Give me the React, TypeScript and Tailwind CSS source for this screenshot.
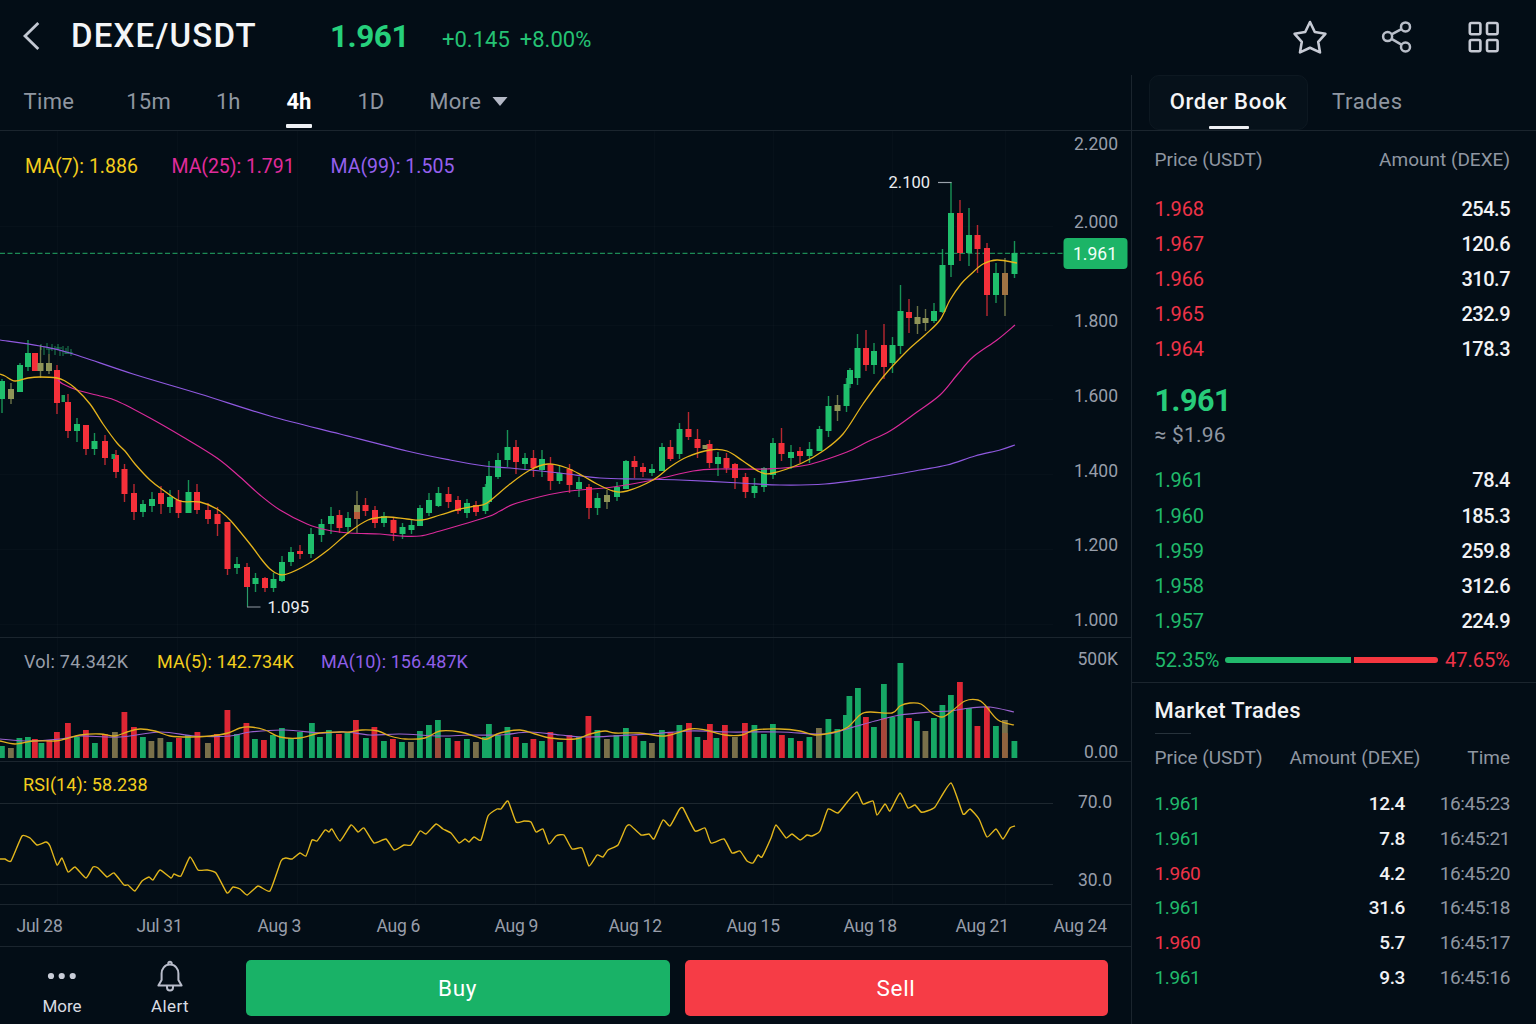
import React from 'react';

type Tone = 'up' | 'down' | 'flat';
type Point = [number, number];
// x, wick top, body top, body bottom, wick bottom, tone
type Candle = [number, number, number, number, number, Tone];
// x, top, tone
type VolumeBar = [number, number, Tone];

interface BookRow {
  price: string;
  amount: string;
}

interface Trade extends BookRow {
  time: string;
  side: 'buy' | 'sell';
}

const TONES: Record<Tone, string> = { up: '#1fbf6c', down: '#f5303a', flat: '#8f9458' };
const VOLUME_TONES: Record<Tone, string> = { up: '#16a765', down: '#de2634', flat: '#79704a' };

const ASKS: BookRow[] = [
  { price: '1.968', amount: '254.5' },
  { price: '1.967', amount: '120.6' },
  { price: '1.966', amount: '310.7' },
  { price: '1.965', amount: '232.9' },
  { price: '1.964', amount: '178.3' },
];

const BIDS: BookRow[] = [
  { price: '1.961', amount: '78.4' },
  { price: '1.960', amount: '185.3' },
  { price: '1.959', amount: '259.8' },
  { price: '1.958', amount: '312.6' },
  { price: '1.957', amount: '224.9' },
];

const TRADES: Trade[] = [
  { price: '1.961', amount: '12.4', time: '16:45:23', side: 'buy' },
  { price: '1.961', amount: '7.8', time: '16:45:21', side: 'buy' },
  { price: '1.960', amount: '4.2', time: '16:45:20', side: 'sell' },
  { price: '1.961', amount: '31.6', time: '16:45:18', side: 'buy' },
  { price: '1.960', amount: '5.7', time: '16:45:17', side: 'sell' },
  { price: '1.961', amount: '9.3', time: '16:45:16', side: 'buy' },
];

const DATES = ['Jul 28', 'Jul 31', 'Aug 3', 'Aug 6', 'Aug 9', 'Aug 12', 'Aug 15', 'Aug 18', 'Aug 21', 'Aug 24'];

const PRICE_TICKS: [string, number][] = [
  ['2.200', 144], ['2.000', 222], ['1.800', 320.5], ['1.600', 395.5], ['1.400', 471], ['1.200', 545], ['1.000', 620],
];

const GRID_X = [57, 177, 297, 415, 535, 654, 773, 892, 1005];
const GRID_Y = [226, 325, 399, 474, 549, 624];

const CANDLES: Candle[] = [
  [2, 379, 381, 399, 413, 'up'], [11, 383, 389, 399, 404, 'flat'], [20, 363, 365, 392, 392, 'up'],
  [28, 340, 353, 367, 371, 'up'], [35, 353, 353, 371, 371, 'down'], [40.5, 345, 363, 371, 378, 'flat'],
  [49, 354, 363, 371, 374, 'flat'], [57, 365, 370, 403, 414, 'down'], [68, 394, 402, 431, 438, 'down'],
  [77, 418, 424, 431, 442, 'up'], [86, 425, 425, 449, 455, 'down'], [94.5, 433, 441, 449, 455, 'up'],
  [105, 435, 441, 458, 465, 'down'], [116, 450, 455, 472, 478, 'down'], [124.5, 464, 469, 494, 502, 'down'],
  [134, 484, 493, 512, 520, 'down'], [143, 500, 504, 512, 517, 'up'], [152, 492, 499, 506, 512, 'up'],
  [161, 486, 493, 504, 514, 'down'], [170, 490, 497, 507, 513, 'up'], [178.5, 490, 500, 513, 518, 'down'],
  [188.5, 480, 492, 513, 513, 'up'], [197, 484, 492, 510, 514, 'down'], [208, 503, 510, 519, 524, 'down'],
  [217.5, 507, 514, 524, 536, 'down'], [227.5, 522, 522, 569, 575, 'down'], [237, 557, 564, 568, 574, 'up'],
  [247, 563, 567, 587, 587, 'down'], [255.5, 573, 578, 584, 592, 'up'], [265, 577, 578, 588, 592, 'down'],
  [273.5, 573, 579, 588, 592, 'up'], [282, 556, 562, 581, 582, 'up'], [291, 547, 552, 562, 566, 'up'],
  [300, 545, 551, 554, 559, 'down'], [311, 528, 534, 554, 558, 'up'], [321.5, 519, 524, 535, 542, 'up'],
  [331, 507, 516, 524, 534, 'up'], [339.5, 510, 515, 528, 533, 'down'], [348, 512, 518, 527, 534, 'up'],
  [357, 491, 505, 519, 533, 'flat'], [365.5, 498, 505, 511, 516, 'down'], [375, 506, 510, 523, 528, 'down'],
  [384, 512, 516, 523, 527, 'up'], [393.5, 517, 520, 533, 541, 'down'], [402.5, 523, 527, 534, 539, 'up'],
  [411.5, 520, 525, 530, 534, 'up'], [420, 505, 508, 526, 526, 'up'], [429, 493, 500, 513, 516, 'up'],
  [438.5, 487, 493, 506, 507, 'up'], [448.5, 487, 494, 502, 508, 'down'], [458, 496, 500, 511, 514, 'down'],
  [467, 499, 503, 513, 518, 'up'], [476, 501, 505, 512, 516, 'down'], [485.5, 484, 487, 511, 514, 'up'],
  [489, 461, 476, 502, 504, 'up'], [498, 453, 460, 477, 479, 'up'], [507.5, 430, 447, 460, 467, 'up'],
  [516, 440, 447, 462, 474, 'down'], [525, 453, 458, 464, 469, 'up'], [533.5, 450, 458, 468, 477, 'down'],
  [542, 450, 459, 470, 477, 'up'], [550.5, 457, 464, 481, 490, 'down'], [559.5, 465, 473, 481, 484, 'up'],
  [569.5, 464, 469, 485, 493, 'down'], [579, 477, 482, 489, 497, 'up'], [589, 484, 487, 508, 519, 'down'],
  [597.5, 493, 498, 508, 515, 'up'], [607, 490, 495, 502, 509, 'flat'], [617, 482, 487, 497, 501, 'up'],
  [626, 460, 461, 489, 489, 'up'], [634.5, 456, 461, 467, 478, 'down'], [643, 463, 467, 472, 477, 'down'],
  [652, 464, 469, 473, 476, 'up'], [662, 443, 447, 471, 471, 'up'], [670.5, 440, 447, 459, 461, 'down'],
  [679.5, 423, 429, 454, 459, 'up'], [688.5, 412, 429, 437, 440, 'down'], [697.5, 429, 439, 448, 458, 'down'],
  [709.5, 440, 444, 463, 468, 'down'], [718, 452, 457, 464, 476, 'up'], [726.5, 453, 458, 468, 473, 'down'],
  [735, 463, 464, 478, 489, 'down'], [745.5, 473, 477, 492, 498, 'down'], [754.5, 478, 486, 493, 498, 'up'],
  [764, 467, 468, 487, 492, 'up'], [773, 438, 443, 475, 479, 'up'], [781.5, 428, 443, 454, 461, 'down'],
  [791, 445, 452, 458, 469, 'up'], [800, 447, 451, 456, 463, 'down'], [809.5, 442, 449, 456, 463, 'up'],
  [819.5, 426, 429, 451, 451, 'up'], [828.5, 396, 406, 431, 437, 'up'], [837.5, 395, 405, 411, 421, 'flat'],
  [846.5, 378, 384, 406, 412, 'up'], [850, 368, 370, 384, 388, 'up'], [857.5, 334, 348, 378, 385, 'up'],
  [866, 330, 348, 365, 371, 'down'], [874, 343, 351, 365, 374, 'up'], [884, 324, 345, 367, 379, 'down'],
  [892.5, 337, 345, 363, 373, 'up'], [900.5, 285, 311, 346, 354, 'up'], [909, 299, 312, 318, 333, 'down'],
  [917.5, 306, 317, 324, 334, 'flat'], [925.5, 309, 318, 323, 331, 'flat'], [934, 303, 311, 321, 323, 'up'],
  [942.5, 249, 265, 312, 313, 'up'], [951, 182, 213, 265, 277, 'up'], [960, 200, 213, 253, 261, 'down'],
  [969, 208, 235, 253, 266, 'up'], [977.5, 225, 235, 249, 273, 'down'], [987, 243, 248, 295, 316, 'down'],
  [996, 263, 273, 295, 303, 'up'], [1005, 258, 273, 295, 316, 'flat'], [1014.5, 241, 253, 274, 278, 'up'],
];

const MA7: Point[] = [
  [0, 374], [5, 376], [15, 381], [28, 378], [40, 377], [57, 378], [65, 381], [75, 388], [90, 404], [103, 424],
  [117, 443], [125, 451], [135, 464], [150, 480], [163, 490], [180, 501], [200, 502], [217, 509], [230, 520],
  [250, 544], [262, 560], [270, 569], [278, 574], [287, 574], [308, 564], [328, 550], [348, 533], [368, 520],
  [387, 517], [407, 519], [422, 520], [440, 515], [460, 509], [475, 506], [487, 503], [510, 484], [530, 470],
  [548, 464], [567, 468], [583, 476], [597, 484], [613, 491], [627, 491], [653, 480], [670, 467], [687, 457],
  [710, 450], [727, 451], [743, 461], [760, 472], [773, 473], [802, 463], [823, 451], [843, 434], [863, 404],
  [883, 377], [907, 351], [925, 335], [940, 320], [950, 300], [961, 284], [970, 275], [983, 264], [997, 260],
  [1017, 263],
];

const MA25: Point[] = [
  [58, 380], [63, 384], [77, 390], [100, 396], [117, 401], [150, 418], [183, 437], [217, 458], [240, 477],
  [260, 495], [280, 510], [307, 524], [327, 530], [350, 533], [380, 534], [400, 536], [420, 536], [440, 531],
  [487, 517], [500, 511], [517, 503], [563, 492], [613, 487], [653, 480], [693, 471], [720, 469], [767, 469],
  [807, 465], [847, 452], [867, 442], [890, 431], [917, 412], [940, 395], [957, 375], [973, 357], [997, 340],
  [1015, 325],
];

const MA99: Point[] = [
  [0, 340], [40, 346], [70, 353], [133, 374], [200, 394], [270, 416], [340, 434], [407, 451], [450, 460],
  [485, 466], [510, 468], [560, 473], [600, 478], [640, 479], [680, 480], [740, 483], [780, 485], [825, 484],
  [880, 477], [920, 470], [947, 465], [975, 456], [1000, 450], [1015, 445],
];

const VOLUMES: VolumeBar[] = [
  [2, 746, 'up'], [11, 748, 'flat'], [19.5, 738, 'up'], [28, 737, 'up'], [35, 739, 'down'], [41.5, 743, 'up'],
  [49.5, 740, 'down'], [57, 732, 'down'], [68, 723, 'down'], [77, 737, 'up'], [86, 730, 'down'], [95, 743, 'up'],
  [105, 734, 'down'], [115, 732, 'flat'], [124.5, 712, 'down'], [134, 727, 'down'], [143, 737, 'up'],
  [151.5, 741, 'flat'], [160.5, 738, 'flat'], [169.5, 742, 'up'], [179, 738, 'down'], [188, 735, 'up'],
  [197.5, 732, 'down'], [208, 743, 'flat'], [217, 734, 'down'], [227.5, 710, 'down'], [237, 734, 'up'],
  [246.5, 723, 'down'], [255, 739, 'up'], [264, 740, 'down'], [273, 735, 'up'], [282, 728, 'up'],
  [291, 738, 'up'], [300, 732, 'up'], [312, 723, 'up'], [320, 737, 'up'], [329, 730, 'up'], [339, 734, 'down'],
  [347.5, 733, 'up'], [356, 720, 'down'], [366, 738, 'up'], [374.5, 727, 'down'], [384, 741, 'up'],
  [393, 739, 'down'], [402, 742, 'up'], [411, 742, 'flat'], [420, 731, 'up'], [429, 725, 'up'], [438, 720, 'up'],
  [448, 738, 'up'], [457.5, 741, 'down'], [467, 739, 'up'], [476, 742, 'flat'], [485, 737, 'up'],
  [489, 724, 'up'], [498, 735, 'up'], [507.5, 727, 'up'], [516, 737, 'down'], [525, 743, 'up'],
  [533.5, 739, 'down'], [542, 741, 'up'], [550.5, 732, 'down'], [560, 742, 'up'], [569.5, 735, 'down'],
  [579, 737, 'up'], [588.5, 716, 'down'], [597.5, 730, 'up'], [607, 739, 'flat'], [616.5, 735, 'up'],
  [626, 728, 'up'], [634.5, 736, 'down'], [643.5, 741, 'up'], [652, 743, 'flat'], [662, 730, 'up'],
  [670.5, 732, 'down'], [679.5, 725, 'up'], [689, 723, 'down'], [697.5, 737, 'up'], [706, 740, 'down'],
  [710, 724, 'down'], [716.5, 738, 'up'], [725, 725, 'down'], [735, 737, 'flat'], [745, 723, 'down'],
  [754.5, 725, 'up'], [764, 734, 'up'], [773, 724, 'up'], [782, 735, 'down'], [791, 738, 'up'],
  [800, 741, 'down'], [809.5, 737, 'up'], [819, 728, 'flat'], [828.5, 719, 'up'], [837.5, 729, 'up'],
  [846, 715, 'up'], [849.5, 696, 'up'], [858, 688, 'up'], [866, 717, 'down'], [874, 727, 'up'],
  [884, 684, 'up'], [892.5, 717, 'up'], [900.5, 663, 'up'], [909, 718, 'down'], [917, 721, 'up'],
  [925.5, 731, 'flat'], [934, 718, 'up'], [942.5, 705, 'up'], [951, 695, 'up'], [960, 682, 'down'],
  [969, 708, 'up'], [977.5, 726, 'down'], [987, 707, 'down'], [996, 726, 'up'], [1005, 720, 'flat'],
  [1014.5, 741, 'up'],
];

const VOL_MA5: Point[] = [
  [0, 741], [15, 744], [33, 741], [55, 741], [65, 739], [80, 735], [100, 734], [115, 736], [127, 732], [140, 729],
  [155, 731], [170, 736], [190, 737], [210, 736], [228, 733], [240, 728], [250, 727], [265, 730], [280, 737],
  [300, 738], [320, 733], [340, 732], [350, 732], [362, 730], [378, 731], [390, 736], [405, 739], [425, 738],
  [440, 731], [460, 732], [480, 738], [487, 739], [500, 733], [520, 730], [535, 734], [550, 738], [575, 739],
  [590, 734], [605, 731], [615, 733], [640, 733], [665, 736], [690, 729], [705, 730], [725, 735], [742, 735],
  [755, 730], [780, 729], [800, 731], [815, 735], [835, 732], [848, 727], [860, 715], [870, 712], [892, 713],
  [900, 706], [910, 703], [921, 704], [932, 713], [942, 717], [952, 711], [965, 701], [978, 700], [985, 705],
  [998, 720], [1014, 725],
];

const VOL_MA10: Point[] = [
  [0, 739], [30, 741], [60, 739], [80, 736], [120, 737], [160, 732], [195, 736], [230, 736], [250, 732],
  [285, 730], [320, 733], [345, 732], [370, 735], [400, 734], [440, 736], [470, 735], [500, 735], [530, 732],
  [560, 735], [590, 737], [650, 734], [690, 731], [730, 732], [780, 732], [825, 734], [850, 728], [875, 721],
  [900, 715], [930, 712], [950, 711], [970, 708], [990, 707], [1014, 712],
];

const RSI: Point[] = [
  [0, 859], [5, 859], [11, 861], [22, 836], [30, 838], [37, 845], [46, 842], [50, 846], [57, 865], [62, 858],
  [68, 872], [75, 867], [86, 878], [93, 867], [98, 868], [107, 877], [114, 873], [124, 885], [128, 885],
  [135, 891], [142, 881], [149, 877], [153, 880], [160, 870], [171, 878], [174, 874], [181, 876], [190, 857],
  [198, 870], [207, 870], [216, 873], [227, 893], [233, 887], [240, 889], [247, 895], [258, 886], [270, 891],
  [281, 861], [286, 858], [292, 859], [300, 853], [306, 856], [312, 840], [317, 841], [325, 830], [329, 832],
  [332, 829], [340, 841], [351, 825], [358, 832], [364, 828], [374, 843], [386, 839], [394, 850], [404, 845],
  [411, 845], [420, 831], [426, 834], [436, 824], [443, 829], [451, 833], [459, 843], [465, 839], [469, 842],
  [474, 837], [481, 840], [488, 816], [497, 809], [501, 809], [508, 801], [516, 822], [524, 821], [531, 822],
  [536, 832], [543, 829], [549, 844], [556, 836], [564, 835], [572, 849], [582, 848], [589, 866], [597, 855],
  [603, 857], [608, 850], [618, 845], [626, 827], [630, 825], [641, 835], [649, 834], [654, 839], [663, 820],
  [670, 826], [679, 810], [683, 808], [695, 831], [705, 828], [711, 843], [724, 839], [732, 853], [740, 851],
  [747, 861], [753, 863], [758, 855], [762, 857], [771, 838], [776, 825], [786, 838], [792, 834], [800, 840],
  [807, 835], [812, 836], [820, 831], [828, 809], [838, 813], [848, 801], [857, 792], [863, 804], [873, 801],
  [877, 815], [885, 804], [890, 811], [900, 793], [908, 808], [915, 805], [921, 812], [927, 811], [935, 807],
  [951, 783], [963, 814], [970, 809], [979, 819], [987, 837], [996, 829], [1003, 839], [1010, 828], [1015, 826],
];

// Cubic path through all points, softened at the joints
const smoothPath = (points: Point[], tension = 6) => {
  let d = `M${points[0][0]} ${points[0][1]}`;
  for (let i = 0; i < points.length - 1; i++) {
    const p0 = points[i - 1] ?? points[i];
    const p1 = points[i];
    const p2 = points[i + 1];
    const p3 = points[i + 2] ?? p2;
    d += `C${p1[0] + (p2[0] - p0[0]) / tension} ${p1[1] + (p2[1] - p0[1]) / tension} `;
    d += `${p2[0] - (p3[0] - p1[0]) / tension} ${p2[1] - (p3[1] - p1[1]) / tension} ${p2[0]} ${p2[1]}`;
  }
  return d;
};

const AxisLabel: React.FC<{ x?: number; y: number; children: string }> = ({ x = 1118, y, children }) => (
  <text x={x} y={y + 6.3} textAnchor="end" className="fill-[#989eaa] text-[17.5px]">
    {children}
  </text>
);

const Header: React.FC = () => (
  <header className="flex h-[75px] items-center pl-[22px] pr-[36px]">
    <svg className="mr-[30px] mb-[3px] h-[32px] w-[19px]" viewBox="0 0 19 32" fill="none">
      <path d="M16.3 3 L3 16 L16.3 29" stroke="#c3c8d2" strokeWidth="2.8" />
    </svg>
    <h1 className="w-[259px] pb-[3px] text-[33px] font-medium tracking-[0.036em] text-[#f4f5f7]">DEXE/USDT</h1>
    <span className="w-[112px] pb-px text-[31.5px] font-bold tracking-[-0.015em] text-[#26d07c]">1.961</span>
    <span className="mr-[10px] pt-[3px] text-[22px] text-[#25c274]">+0.145</span>
    <span className="pt-[3px] text-[22px] text-[#25c274]">+8.00%</span>

    <div className="ml-auto flex items-center pb-[2px]">
      <svg className="mr-[53px] h-[36px] w-[36px]" viewBox="0 0 36 36" fill="none">
        <path
          d="M18 3 L22.8 13 L33.4 14.8 L26.2 22.8 L28 33.4 L18 28.8 L8 33.4 L9.8 22.8 L2.6 14.8 L13.2 13 Z"
          stroke="#c6cad4"
          strokeWidth="2.6"
          strokeLinejoin="round"
        />
      </svg>
      <svg className="mr-[55px] h-[32px] w-[32px]" viewBox="0 0 32 32" fill="none" stroke="#b9bec9" strokeWidth="2.5">
        <circle cx="24.5" cy="5.9" r="4.5" />
        <circle cx="6.6" cy="15.6" r="4.5" />
        <circle cx="24.5" cy="26" r="4.5" />
        <path d="M10.6 13.4 L20.4 8.2 M10.6 17.9 L20.4 23.6" />
      </svg>
      <svg className="h-[32px] w-[32px]" viewBox="0 0 32 32" fill="none" stroke="#c6cad4" strokeWidth="2.6">
        <rect x="1.8" y="2" width="10.6" height="11.2" rx="1.6" />
        <rect x="19" y="2" width="10.6" height="11.2" rx="1.6" />
        <rect x="1.8" y="19" width="10.6" height="11.2" rx="1.6" />
        <rect x="19" y="19" width="10.6" height="11.2" rx="1.6" />
      </svg>
    </div>
  </header>
);

const Timeframes: React.FC = () => (
  <nav className="flex h-[56px] shrink-0 items-center gap-[46px] border-b border-[#1b252e] pb-[3px] pl-[23.5px] text-[22px] text-[#8f96a1]">
    <span className="mr-[6px] tracking-[0.015em]">Time</span>
    <span className="tracking-[0.01em]">15m</span>
    <span className="-ml-px">1h</span>
    <span className="relative font-bold text-white">
      4h
      <i className="absolute -bottom-[10px] left-0 h-[3.5px] w-[26px] rounded-[1px] bg-[#eef0f4]" />
    </span>
    <span>1D</span>
    <span className="-ml-px flex items-center tracking-[0.015em]">
      More
      <svg className="ml-[11px] h-[9px] w-[16px]" viewBox="0 0 16 9">
        <path d="M0.5 0 H15.5 L8 9 Z" fill="#b4b9c6" />
      </svg>
    </span>
  </nav>
);

const PriceChart: React.FC = () => (
  <section className="relative h-[507px] shrink-0 border-b border-[#1b252e]">
    <svg className="block h-[506px] w-[1131px]" viewBox="0 131 1131 506" fill="none">
      {GRID_X.map((x) => (
        <path key={x} d={`M${x}.5 131V637`} stroke="#ffffff" strokeOpacity="0.02" />
      ))}
      {GRID_Y.map((y) => (
        <path key={y} d={`M0 ${y}.5H1053`} stroke="#ffffff" strokeOpacity="0.018" />
      ))}

      {/* Faint cluster of ticks left of the first peak */}
      <path
        d="M41 344v6 M44 347v8 M47 343v4 M49 349v5 M52 344v7 M55 346v9 M58 344v5 M60 350v6 M63 346v10 M66 348v6 M68 346v8 M71 349v7 M46 349h6 M56 348h6 M64 353h9"
        stroke="#25a869"
        strokeOpacity="0.75"
      />

      {/* Last price */}
      <path d="M0 253.3H1064" stroke="#1c8a55" strokeWidth="1.2" strokeDasharray="5 2.5" />

      {CANDLES.map(([x, high, top, bottom, low, tone]) => (
        <g key={x}>
          <path d={`M${x} ${high}V${low}`} stroke={TONES[tone]} strokeOpacity="0.75" strokeWidth="1.4" />
          <rect x={x - 3} y={top} width="6" height={bottom - top} fill={TONES[tone]} />
        </g>
      ))}
      <rect x="61.5" y="395" width="3.5" height="7" fill="#18a05a" />
      <rect x="111.5" y="454" width="3.5" height="5" fill="#18a05a" />
      <rect x="702.5" y="445" width="5" height="4" fill="#8f9458" />
      <rect x="1002" y="273" width="6" height="22" fill="#a8663c" fillOpacity="0.7" />
      <rect x="354" y="512" width="6" height="7" fill="#c8402f" fillOpacity="0.7" />

      <path d={smoothPath(MA99)} stroke="#9059e0" strokeWidth="1.2" />
      <path d={smoothPath(MA25)} stroke="#d92a99" strokeWidth="1.2" />
      <path d={smoothPath(MA7)} stroke="#e6b41c" strokeWidth="1.3" />

      {/* High and low callouts */}
      <path d="M938 182.5H951.5" stroke="#9aa2ab" strokeWidth="1.2" />
      <text x="930" y="188.3" textAnchor="end" className="fill-[#eceef1] text-[16.5px]">2.100</text>
      <path d="M247.5 587V607" stroke="#2a9a68" strokeWidth="1.2" />
      <path d="M247 607H260.5" stroke="#7b848d" strokeWidth="1.2" />
      <text x="267.5" y="613.3" className="fill-[#eceef1] text-[16.5px]">1.095</text>

      {PRICE_TICKS.map(([label, y]) => (
        <AxisLabel key={label} y={y}>{label}</AxisLabel>
      ))}
      <rect x="1063.5" y="238" width="64" height="31" rx="4" fill="#1cb467" />
      <text x="1117" y="260.3" textAnchor="end" className="fill-[#f2fff8] text-[17.5px]">1.961</text>
    </svg>

    <div className="absolute left-[25px] top-[21px] flex text-[19.5px] leading-[30px]">
      <span className="w-[146.5px] text-[#f3ce1d]">MA(7): 1.886</span>
      <span className="w-[159px] tracking-[-0.003em] text-[#e02b9c]">MA(25): 1.791</span>
      <span className="text-[#9560ee]">MA(99): 1.505</span>
    </div>
  </section>
);

const VolumeChart: React.FC = () => (
  <section className="relative h-[124px] shrink-0 border-b border-[#1b252e]">
    <svg className="block h-[123px] w-[1131px] overflow-visible" viewBox="0 638 1131 123" fill="none">
      {GRID_X.map((x) => (
        <path key={x} d={`M${x}.5 638V761`} stroke="#ffffff" strokeOpacity="0.02" />
      ))}
      {VOLUMES.map(([x, top, tone]) => (
        <rect key={x} x={x - 3} y={top} width="5.8" height={758 - top} fill={VOLUME_TONES[tone]} />
      ))}
      <rect x="881" y="718" width="5.8" height="40" fill="#a8463a" />
      <rect x="435" y="738" width="5.8" height="20" fill="#9d4a3a" />
      <rect x="1002" y="733" width="5.8" height="25" fill="#96603c" fillOpacity="0.8" />
      <path d={smoothPath(VOL_MA10)} stroke="#9a62cf" strokeWidth="1.2" />
      <path d={smoothPath(VOL_MA5)} stroke="#dfae1e" strokeWidth="1.3" />
      <AxisLabel y={658.5}>500K</AxisLabel>
      <AxisLabel y={751.7}>0.00</AxisLabel>
    </svg>
    <div className="absolute left-[24px] top-[9px] flex text-[18px] leading-[30px] tracking-[0.004em]">
      <span className="w-[133px] tracking-[0.015em] text-[#989eaa]">Vol: 74.342K</span>
      <span className="w-[164px] text-[#f3ce1d]">MA(5): 142.734K</span>
      <span className="text-[#8f5fe8]">MA(10): 156.487K</span>
    </div>
  </section>
);

const RsiChart: React.FC = () => (
  <section className="relative h-[143px] shrink-0 border-b border-[#1b252e]">
    <svg className="block h-[142px] w-[1131px]" viewBox="0 762 1131 142" fill="none">
      {GRID_X.map((x) => (
        <path key={x} d={`M${x}.5 762V904`} stroke="#ffffff" strokeOpacity="0.02" />
      ))}
      <path d="M0 803.5H1053 M0 884.5H1053" stroke="#1d272f" />
      <path d={smoothPath(RSI, 12)} stroke="#e2b61c" strokeWidth="1.4" />
      <AxisLabel x={1112} y={802}>70.0</AxisLabel>
      <AxisLabel x={1112} y={879.5}>30.0</AxisLabel>
    </svg>
    <span className="absolute left-[23px] top-[8px] text-[18px] leading-[30px] tracking-[0.004em] text-[#f3ce1d]">
      RSI(14): 58.238
    </span>
  </section>
);

const ActionBar: React.FC = () => (
  <footer className="flex grow items-start pt-[13px]">
    <div className="ml-[31px] flex w-[62px] flex-col items-center text-[17px] text-[#d9dce2]">
      <svg className="h-[32px] w-[30px]" viewBox="0 0 30 32" fill="#c9cdd8">
        <circle cx="4" cy="16" r="3.1" />
        <circle cx="14.7" cy="16" r="3.1" />
        <circle cx="25.7" cy="16" r="3.1" />
      </svg>
      <span className="mt-[2px] leading-[24px]">More</span>
    </div>
    <div className="ml-[46px] flex w-[62px] flex-col items-center text-[17px] text-[#d9dce2]">
      <svg className="h-[32px] w-[28px]" viewBox="0 0 28 32" fill="none" stroke="#b9bdcb" strokeWidth="2" strokeLinejoin="round">
        <path d="M12.3 4.6 V3.4 a1.7 1.7 0 0 1 3.4 0 V4.6" />
        <path d="M14 4.6 C8.6 4.6 5.6 8.8 5.6 13.6 V20 L2.4 25.6 H25.6 L22.4 20 V13.6 C22.4 8.8 19.4 4.6 14 4.6 Z" />
        <path d="M11 26 V27.4 a3 3 0 0 0 6 0 V26" />
      </svg>
      <span className="mt-[2px] leading-[24px] tracking-[0.025em]">Alert</span>
    </div>
    <button className="ml-[44.5px] h-[56px] w-[424px] rounded-[5px] bg-[#19b267] pt-[2px] text-[22.5px] tracking-[0.03em] text-white">
      Buy
    </button>
    <button className="ml-[15px] h-[56px] w-[423px] rounded-[5px] bg-[#f63c46] pt-[2px] text-[22.5px] tracking-[0.03em] text-white">
      Sell
    </button>
  </footer>
);

const BookRows: React.FC<{ rows: BookRow[]; side: 'ask' | 'bid' }> = ({ rows, side }) => (
  <div className="text-[20px] leading-[35.1px]">
    {rows.map((row) => (
      <div key={row.price} className="flex justify-between">
        <span className={side === 'ask' ? 'tracking-[-0.01em] text-[#ee3348]' : 'tracking-[-0.01em] text-[#20b96b]'}>
          {row.price}
        </span>
        <span className="font-medium tracking-[-0.025em] text-[#f1f2f4]">{row.amount}</span>
      </div>
    ))}
  </div>
);

const OrderBook: React.FC = () => (
  <div className="h-[552px] shrink-0 border-b border-[#1b252e] pl-[22.5px] pr-[26px]">
    <div className="flex justify-between pt-[14px] text-[19px] leading-[30px] text-[#8f96a1]">
      <span>Price (USDT)</span>
      <span>Amount (DEXE)</span>
    </div>
    <div className="mt-[17px]">
      <BookRows rows={ASKS} side="ask" />
    </div>
    <div className="mt-[15px] text-[30.5px] font-bold leading-[38px] tracking-[-0.015em] text-[#27cc7a]">1.961</div>
    <div className="text-[21px] leading-[30px] tracking-[0.01em] text-[#8f96a1]">≈ $1.96</div>
    <div className="mt-[13px]">
      <BookRows rows={BIDS} side="bid" />
    </div>
    <div className="mt-[6.5px] flex items-center leading-[30px]">
      <span className="w-[70px] text-[20px] text-[#20b96b]">52.35%</span>
      <div className="flex h-[6px] w-[213.5px] gap-[3px]">
        <i className="h-[6px] w-[126px] rounded-l-full bg-[#22b96c]" />
        <i className="h-[6px] grow rounded-r-full bg-[#f4363f]" />
      </div>
      <span className="ml-auto text-[20px] text-[#ee3348]">47.65%</span>
    </div>
  </div>
);

const MarketTrades: React.FC = () => (
  <div className="pl-[22.5px] pr-[26px]">
    <h2 className="pt-[13px] text-[22px] font-medium leading-[30px] tracking-[0.017em] text-[#f1f2f4]">Market Trades</h2>
    <div className="mt-[7px] h-px w-[36px] bg-[#27323b]" />
    <div className="mt-[9px] flex text-[19px] leading-[30px] text-[#8f96a1]">
      <span className="w-[135px]">Price (USDT)</span>
      <span>Amount (DEXE)</span>
      <span className="ml-auto">Time</span>
    </div>
    <div className="mt-[14px] text-[19px] leading-[34.8px]">
      {TRADES.map((trade) => (
        <div key={trade.time} className="flex tracking-[-0.02em]">
          <span className={trade.side === 'buy' ? 'text-[#20b96b]' : 'text-[#ee3348]'}>{trade.price}</span>
          <span className="ml-auto font-medium text-[#f1f2f4]">{trade.amount}</span>
          <span className="w-[105px] text-right text-[#8f96a1]">{trade.time}</span>
        </div>
      ))}
    </div>
  </div>
);

const App: React.FC = () => {
  return (
    <div className="h-[1024px] w-[1536px] overflow-hidden bg-[#030d16] font-['Roboto',sans-serif]">
      <Header />
      <main className="flex h-[949px]">
        <div className="flex w-[1132px] flex-col border-r border-[#1b252e]">
          <Timeframes />
          <PriceChart />
          <VolumeChart />
          <RsiChart />
          <div className="grid h-[42px] shrink-0 grid-cols-[120px_121px_119px_118px_114px_118px_117px_112px_98px_auto] items-center border-b border-[#1b252e] pl-[16.5px] pt-px text-[17.5px] tracking-[-0.015em] text-[#989eaa]">
            {DATES.map((date) => (
              <span key={date}>{date}</span>
            ))}
          </div>
          <ActionBar />
        </div>

        <aside className="flex w-[404px] flex-col">
          <div className="flex h-[56px] shrink-0 items-center border-b border-[#1b252e] pl-[17px] text-[22px]">
            <div className="relative flex h-[55px] w-[159px] items-center justify-center rounded-[10px] border border-[#0d1821] bg-[#06111a] pb-[3px] font-medium tracking-[0.032em] text-[#f4f5f7]">
              Order Book
              <i className="absolute bottom-0 left-[59px] h-[3.5px] w-[40px] rounded-[1px] bg-[#eef0f4]" />
            </div>
            <span className="ml-[24px] pb-[3px] tracking-[0.03em] text-[#8f96a1]">Trades</span>
          </div>
          <OrderBook />
          <MarketTrades />
        </aside>
      </main>
    </div>
  );
};

export default App;
